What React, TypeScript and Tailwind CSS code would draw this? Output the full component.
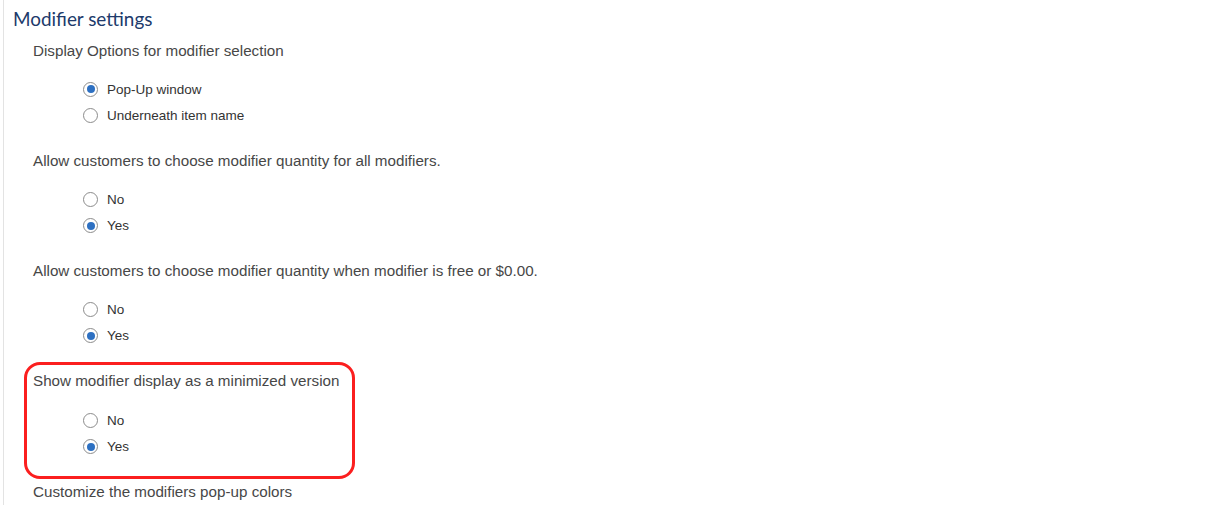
import React from "react";

type Group = {
  question: string;
  options: string[];
  selected: number;
  highlight?: boolean;
};

const groups: Group[] = [
  {
    question: "Display Options for modifier selection",
    options: ["Pop-Up window", "Underneath item name"],
    selected: 0,
  },
  {
    question: "Allow customers to choose modifier quantity for all modifiers.",
    options: ["No", "Yes"],
    selected: 1,
  },
  {
    question:
      "Allow customers to choose modifier quantity when modifier is free or $0.00.",
    options: ["No", "Yes"],
    selected: 1,
  },
  {
    question: "Show modifier display as a minimized version",
    options: ["No", "Yes"],
    selected: 1,
    highlight: true,
  },
];

function Radio({ checked }: { checked: boolean }) {
  return (
    <span className="flex h-[15px] w-[15px] shrink-0 items-center justify-center rounded-full border border-[#8c8c8c] bg-white">
      {checked && <span className="h-[8px] w-[8px] rounded-full bg-[#2d70c2]" />}
    </span>
  );
}

function OptionGroup({ group }: { group: Group }) {
  return (
    <div className="relative">
      {/* red annotation around the highlighted setting */}
      {group.highlight && (
        <span className="pointer-events-none absolute -left-[9px] -top-[10px] h-[117px] w-[331px] rounded-[16px] border-[3px] border-[#fb1f1f]" />
      )}
      <p className="h-[18px] text-[15.2px] leading-[18px] text-[#474747]">
        {group.question}
      </p>
      <div
        className={
          group.highlight
            ? "mt-[22.5px] flex flex-col gap-[11.5px] pl-[50px]"
            : "mt-[21.5px] flex flex-col gap-[11.5px] pl-[50px]"
        }
      >
        {group.options.map((opt, i) => (
          <label key={opt} className="flex h-[15px] items-center gap-[9px]">
            <Radio checked={i === group.selected} />
            <span className="text-[13.5px] leading-[15px] text-[#333]">{opt}</span>
          </label>
        ))}
      </div>
    </div>
  );
}

export default function App() {
  return (
    <div
      className="h-[505px] w-[1227px] overflow-hidden bg-white"
      style={{ fontFamily: '"Liberation Sans", Arial, sans-serif' }}
    >
      <div className="ml-[3px] h-full border-l border-[#e3e3e3] pl-[9px] pt-[8px]">
        <h2
          className="text-[18.9px] leading-[22px] text-[#203a6b]"
          style={{ fontFamily: 'Lato, "Noto Sans", sans-serif' }}
        >
          Modifier settings
        </h2>
        <div className="mt-[12px] flex flex-col gap-[29px] pl-[20px]">
          {groups.map((g) => (
            <OptionGroup key={g.question} group={g} />
          ))}
          <p className="h-[18px] text-[15.2px] leading-[18px] text-[#474747]">
            Customize the modifiers pop-up colors
          </p>
        </div>
      </div>
    </div>
  );
}
